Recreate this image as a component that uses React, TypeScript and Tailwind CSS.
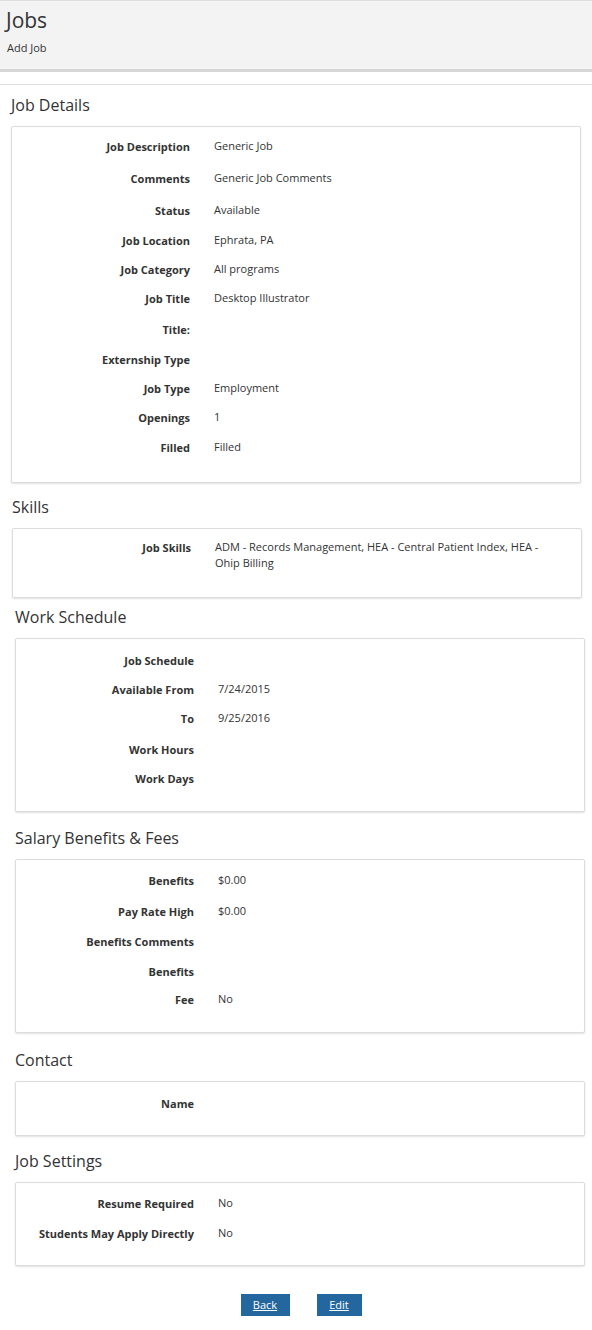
import React from 'react'

type Row = { label: string; value?: string; h: string }

const jobDetails: Row[] = [
  { label: 'Job Description', value: 'Generic Job', h: 'h-[32px]' },
  { label: 'Comments', value: 'Generic Job Comments', h: 'h-[32px]' },
  { label: 'Status', value: 'Available', h: 'h-[30px]' },
  { label: 'Job Location', value: 'Ephrata, PA', h: 'h-[29px]' },
  { label: 'Job Category', value: 'All programs', h: 'h-[29px]' },
  { label: 'Job Title', value: 'Desktop Illustrator', h: 'h-[31px]' },
  { label: 'Title:', h: 'h-[30px]' },
  { label: 'Externship Type', h: 'h-[29px]' },
  { label: 'Job Type', value: 'Employment', h: 'h-[29px]' },
  { label: 'Openings', value: '1', h: 'h-[30px]' },
  { label: 'Filled', value: 'Filled', h: 'h-[30px]' },
]

const workSchedule: Row[] = [
  { label: 'Job Schedule', h: 'h-[29px]' },
  { label: 'Available From', value: '7/24/2015', h: 'h-[29px]' },
  { label: 'To', value: '9/25/2016', h: 'h-[31px]' },
  { label: 'Work Hours', h: 'h-[29px]' },
  { label: 'Work Days', h: 'h-[30px]' },
]

const salary: Row[] = [
  { label: 'Benefits', value: '$0.00', h: 'h-[31px]' },
  { label: 'Pay Rate High', value: '$0.00', h: 'h-[30px]' },
  { label: 'Benefits Comments', h: 'h-[30px]' },
  { label: 'Benefits', h: 'h-[28px]' },
  { label: 'Fee', value: 'No', h: 'h-[30px]' },
]

const settings: Row[] = [
  { label: 'Resume Required', value: 'No', h: 'h-[30px]' },
  { label: 'Students May Apply Directly', value: 'No', h: 'h-[30px]' },
]

function DetailRow({ row }: { row: Row }) {
  return (
    <div className={`flex items-start ${row.h}`}>
      <div className="w-[178px] shrink-0 pt-[1px] text-right text-[11px] font-bold leading-[15px] text-[#333]">
        {row.label}
      </div>
      <div className="ml-6 w-[346px] text-[11px] leading-[16px] text-[#333]">{row.value}</div>
    </div>
  )
}

function Section({
  title,
  rows,
  wrap,
  body,
}: {
  title: string
  rows: Row[]
  wrap: string
  body: string
}) {
  return (
    <section className={wrap}>
      <h2 className="text-[16px] leading-[22px] text-[#333]">{title}</h2>
      <div className={`mt-[10px] w-[570px] rounded-[2px] border border-[#dcdcdc] bg-white shadow-[0_1px_2px_rgba(0,0,0,0.12)] ${body}`}>
        {rows.map((r, i) => (
          <DetailRow key={i} row={r} />
        ))}
      </div>
    </section>
  )
}

export default function App() {
  return (
    <div className="min-h-[1330px] w-[592px] bg-white font-['Open_Sans',sans-serif] text-[#333]">
      {/* Page header */}
      <div className="h-[72px] border-t border-[#dedede] border-b-[3px] border-b-[#d6d6d6] bg-[#f3f3f3] pl-[6px] pt-[5px]">
        <h1 className="text-[21px] leading-[28px] text-[#333]">Jobs</h1>
        <p className="mt-[6px] pl-[1px] text-[11px] leading-[15px]">Add Job</p>
      </div>
      <div className="mt-[12px] border-t border-[#dedede]" />

      <Section title="Job Details" rows={jobDetails} wrap="pl-[11px] pt-[9px]" body="pt-[11px] pb-[13px]" />

      <Section
        title="Skills"
        rows={[
          {
            label: 'Job Skills',
            value: 'ADM - Records Management, HEA - Central Patient Index, HEA - Ohip Billing',
            h: 'h-auto',
          },
        ]}
        wrap="pl-[12px] pt-[13px]"
        body="pt-[10px] pb-[26px]"
      />

      <Section title="Work Schedule" rows={workSchedule} wrap="pl-[15px] pt-[8px]" body="pt-[13px] pb-[11px]" />
      <Section title="Salary Benefits & Fees" rows={salary} wrap="pl-[15px] pt-[15px]" body="pt-[12px] pb-[11px]" />
      <Section
        title="Contact"
        rows={[{ label: 'Name', h: 'h-[30px]' }]}
        wrap="pl-[15px] pt-[16px]"
        body="pt-[13px] pb-[10px]"
      />
      <Section title="Job Settings" rows={settings} wrap="pl-[15px] pt-[14px]" body="pt-[12px] pb-[10px]" />

      <div className="mt-[28px] flex justify-center gap-[27px] pl-[10px]">
        <button className="h-[22px] w-[49px] bg-[#24679f] text-[11px] text-white underline">Back</button>
        <button className="h-[22px] w-[45px] bg-[#24679f] text-[11px] text-white underline">Edit</button>
      </div>
    </div>
  )
}
